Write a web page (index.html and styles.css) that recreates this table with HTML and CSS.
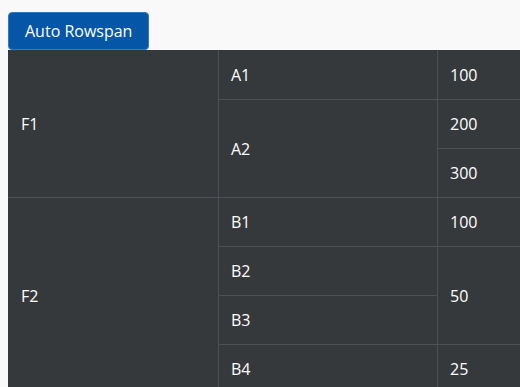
FILE: index.html
```html
<!DOCTYPE html>
<html>
<head>
<meta charset="utf-8">
<link rel="stylesheet" href="styles.css">
</head>
<body>
<div class="page">
  <button class="btn">Auto Rowspan</button>
  <div class="clip">
  <table class="grid">
    <colgroup>
      <col class="c1"><col class="c2"><col class="c3">
    </colgroup>
    <tbody>
      <tr><td rowspan="3">F1</td><td>A1</td><td>100</td></tr>
      <tr><td rowspan="2">A2</td><td>200</td></tr>
      <tr><td>300</td></tr>
      <tr><td rowspan="4">F2</td><td>B1</td><td>100</td></tr>
      <tr><td>B2</td><td rowspan="2">50</td></tr>
      <tr><td>B3</td></tr>
      <tr><td>B4</td><td>25</td></tr>
    </tbody>
  </table>
  </div>
</div>
</body>
</html>
```

FILE: styles.css
```css
html, body {
  margin: 0;
  padding: 0;
  overflow: hidden;
  background: #f9f9f9;
  font-family: "Open Sans", "Liberation Sans", sans-serif;
}
.page {
  padding: 12px 0 0 8px;
}
.btn {
  display: block;
  font-family: inherit;
  font-size: 16px;
  line-height: 24px;
  padding: 6px 16px;
  color: #fff;
  background: #0656a8;
  border: 1px solid #3479c6;
  border-radius: 4px;
  margin: 0;
}
.clip {
  overflow: hidden;
}
.grid {
  border-collapse: collapse;
  table-layout: fixed;
  width: 648px;
  background: #36393c;
  color: #fff;
  font-size: 16px;
  line-height: 24px;
}
.c1 { width: 210px; }
.c2 { width: 219px; }
.c3 { width: 219px; }
.grid td {
  border: 1px solid #4d5156;
  padding: 12px 12px;
  vertical-align: middle;
  height: 24px;
}
.grid tr:first-child td { border-top-color: #36393c; }
.grid td:first-child { border-left-color: #36393c; }
```
